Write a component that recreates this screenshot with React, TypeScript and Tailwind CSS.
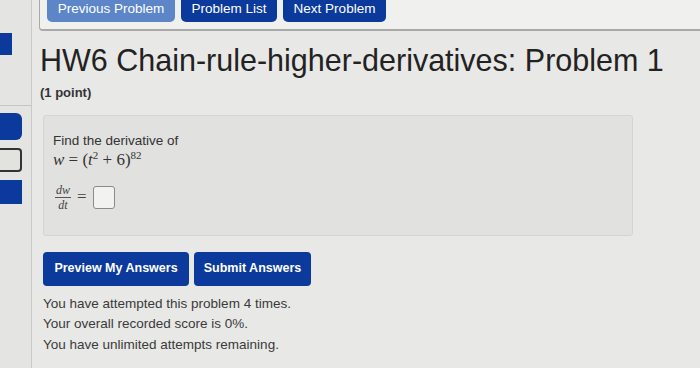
export default function App() {
  return (
    <div className="flex h-[368px] w-[700px] overflow-hidden bg-[#e8e8e6] font-['Liberation_Sans',Arial,sans-serif] text-[#2a2a2a]">
      {/* left rail */}
      <aside className="flex w-[32px] shrink-0 flex-col border-r border-[#c9c9c7] bg-[#e4e4e2]">
        <div className="mt-[33px] h-[22px] w-[12px] bg-[#0b3a9c]" />
        <div className="mt-[50px] h-px w-full bg-[#c4c4c2]" />
        <div className="mt-[7px] h-[27px] w-[22px] rounded-r-[6px] bg-[#0b3a9c]" />
        <div className="mt-[8px] h-[24px] w-[22px] rounded-r-[4px] border-2 border-l-0 border-[#333] bg-[#e2e2df]" />
        <div className="mt-[8px] h-[24px] w-[22px] bg-[#0b3a9c]" />
      </aside>

      <main className="flex-1">
        <nav className="ml-[7px] flex h-[31px] gap-[6px] rounded-bl-[4px] border-b-2 border-l border-[#a9a9a7] bg-[#f0f0ee] pl-[7px]">
          <button className="-mt-[5px] h-[27px] w-[128px] rounded-[5px] bg-[#5c86c8] pt-[2px] text-[13.5px] text-white">
            Previous Problem
          </button>
          <button className="-mt-[5px] h-[27px] w-[96px] rounded-[5px] bg-[#0b3a9c] pt-[2px] text-[13.5px] text-white">
            Problem List
          </button>
          <button className="-mt-[5px] h-[27px] w-[103px] rounded-[5px] bg-[#0b3a9c] pt-[2px] text-[13.5px] text-white">
            Next Problem
          </button>
        </nav>

        <div className="pl-[8px]">
          <h1 className="mt-[10px] whitespace-nowrap text-[30.5px] leading-[38px] text-[#222]">
            HW6 Chain-rule-higher-derivatives: Problem 1
          </h1>
          <p className="mt-[4px] text-[13px] font-bold text-[#333]">(1 point)</p>

          <section className="ml-[3px] mt-[12px] h-[121px] w-[590px] rounded-[3px] border border-[#d4d4d2] bg-[#e1e1df] pl-[9px] pt-[16px]">
            <p className="text-[13.5px] leading-[17px] text-[#333]">Find the derivative of</p>
            <p className="font-['Liberation_Serif',serif] text-[17px] leading-[22px] text-[#333]">
              <i>w</i> = (<i>t</i>
              <sup className="text-[11px]">2</sup> + 6)
              <sup className="text-[11px]">82</sup>
            </p>
            <div className="mt-[13px] flex items-center gap-[6px] font-['Liberation_Serif',serif] text-[#444]">
              <span className="flex flex-col items-center pl-[2px] text-[12px] italic leading-[12px]">
                <span className="border-b border-[#555] px-[1px] pb-[1px]">dw</span>
                <span className="pt-[1px]">dt</span>
              </span>
              <span className="text-[17px]">=</span>
              <span className="h-[23px] w-[22px] rounded-[3px] border border-[#8a8a8a] bg-[#f2f2f0]" />
            </div>
          </section>

          <div className="ml-[3px] mt-[16px] flex gap-[5px]">
            <button className="h-[34px] w-[146px] rounded-[4px] bg-[#0b3a9c] text-[12.5px] font-bold text-white">
              Preview My Answers
            </button>
            <button className="h-[34px] w-[117px] rounded-[4px] bg-[#0b3a9c] text-[12.5px] font-bold text-white">
              Submit Answers
            </button>
          </div>

          <div className="ml-[3px] mt-[8px] text-[13.5px] leading-[20.5px] text-[#3a3a3a]">
            <p>You have attempted this problem 4 times.</p>
            <p>Your overall recorded score is 0%.</p>
            <p>You have unlimited attempts remaining.</p>
          </div>
        </div>
      </main>
    </div>
  );
}
